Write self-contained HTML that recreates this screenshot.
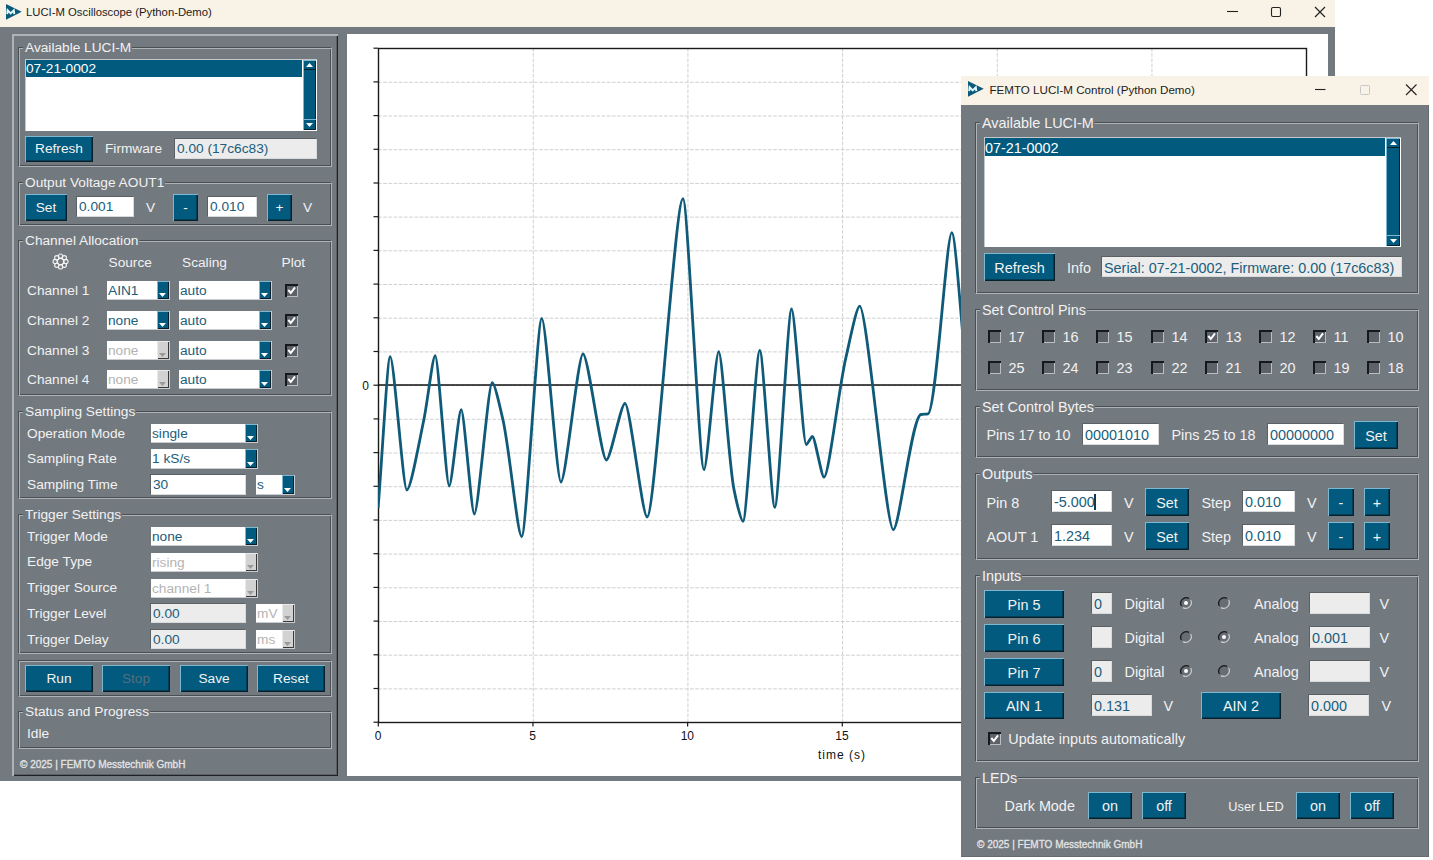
<!DOCTYPE html>
<html><head><meta charset="utf-8"><style>
html,body{margin:0;padding:0;background:#ffffff;width:1433px;height:860px;overflow:hidden;}
body{position:relative;font-family:"Liberation Sans", sans-serif;}
div,svg{position:absolute;}
.t{white-space:pre;}
</style></head><body>
<div style="left:0px;top:0px;width:1335px;height:27px;background:#f9f2e6"></div>
<div style="left:0px;top:27px;width:1335px;height:754px;background:#72797f"></div>
<svg style="left:5.5px;top:3.5px" width="17" height="17"><polygon points="0,0 15.7,7.7 0,15.7" fill="#0b5a7a"/><path d="M1.2,10.2 L1.6,6.2 L4.7,9.3 L7.8,6.2 L8.3,10.2" fill="none" stroke="#e8fbff" stroke-width="1.9" stroke-linejoin="miter"/></svg>
<div class="t" style="left:26px;top:6.83px;font-size:11.3px;line-height:11.3px;color:#1c1c1c;">LUCI-M Oscilloscope (Python-Demo)</div>
<svg style="left:1222px;top:2px" width="110" height="20"><line x1="5" y1="9.5" x2="16" y2="9.5" stroke="#222" stroke-width="1.1"/><rect x="49.5" y="5.5" width="9" height="9" rx="1.5" fill="none" stroke="#222" stroke-width="1.1"/><path d="M93,5 L103,15 M103,5 L93,15" stroke="#222" stroke-width="1.2"/></svg>
<div style="left:12px;top:34px;width:326px;height:742px;background:#72797f;box-shadow:inset 2px 2px 0 #aeb3b8, inset -1px -1px 0 #1e2226, inset -2px -2px 0 #5a5f64"></div>
<div style="left:18px;top:47px;width:314px;height:120px;box-sizing:border-box;border:1px solid;border-color:#4a4f54 #aeb3b8 #aeb3b8 #4a4f54;box-shadow:inset 1px 1px 0 #aeb3b8, inset -1px -1px 0 #4a4f54"></div>
<div class="t" style="left:23px;top:40.90px;font-size:13.7px;line-height:13.7px;color:#f2f2f2;background:#72797f;padding:0 1px 0 2px">Available LUCI-M</div>
<div style="left:25px;top:59px;width:292px;height:72px;background:#ffffff;box-shadow:inset 1px 1px 0 #c3c8cc"></div>
<div style="left:26px;top:60px;width:276px;height:17px;background:#025a7e"></div>
<div class="t" style="left:26px;top:61.90px;font-size:13.7px;line-height:13.7px;color:#ffffff;">07-21-0002</div>
<div style="left:303px;top:60px;width:13px;height:70px;background:#025a7e;box-shadow:inset 1px 0 0 #7db8d0, inset -1px 0 0 #08202c"></div>
<div style="left:303px;top:60px;width:13px;height:10px;background:#025a7e;box-shadow:inset 1px 1px 0 #7db8d0, inset -1px -1px 0 #08202c"></div>
<div style="left:303px;top:119px;width:13px;height:11px;background:#025a7e;box-shadow:inset 1px 1px 0 #7db8d0, inset -1px -1px 0 #08202c"></div>
<svg style="left:306.0px;top:63px" width="7" height="4"><polygon points="0,4 7,4 3.5,0" fill="#fff"/></svg>
<svg style="left:306.0px;top:123px" width="7" height="4"><polygon points="0,0 7,0 3.5,4" fill="#fff"/></svg>
<div style="left:25px;top:136px;width:68px;height:26px;background:#025a7e;box-shadow:inset 1px 1px 0 #7db8d0, inset -1px -1px 0 #08202c, inset -2px -2px 0 #043d55"></div>
<div class="t" style="left:-241.0px;width:600px;text-align:center;top:142.40px;font-size:13.7px;line-height:13.7px;color:#f2f2f2;">Refresh</div>
<div class="t" style="left:105px;top:142.40px;font-size:13.7px;line-height:13.7px;color:#f2f2f2;">Firmware</div>
<div style="left:175px;top:139px;width:142px;height:20px;background:#ececec;box-shadow:-1px -1px 0 #5b6065, inset -1px -1px 0 #d8dadc"></div>
<div class="t" style="left:177px;top:142.40px;font-size:13.7px;line-height:13.7px;color:#205d7b;">0.00 (17c6c83)</div>
<div style="left:18px;top:182px;width:314px;height:44px;box-sizing:border-box;border:1px solid;border-color:#4a4f54 #aeb3b8 #aeb3b8 #4a4f54;box-shadow:inset 1px 1px 0 #aeb3b8, inset -1px -1px 0 #4a4f54"></div>
<div class="t" style="left:23px;top:175.90px;font-size:13.7px;line-height:13.7px;color:#f2f2f2;background:#72797f;padding:0 1px 0 2px">Output Voltage AOUT1</div>
<div style="left:25px;top:194px;width:42px;height:27px;background:#025a7e;box-shadow:inset 1px 1px 0 #7db8d0, inset -1px -1px 0 #08202c, inset -2px -2px 0 #043d55"></div>
<div class="t" style="left:-254.0px;width:600px;text-align:center;top:200.90px;font-size:13.7px;line-height:13.7px;color:#f2f2f2;">Set</div>
<div style="left:77px;top:197px;width:57px;height:20px;background:#ffffff;box-shadow:-1px -1px 0 #5b6065, inset -1px -1px 0 #d8dadc"></div>
<div class="t" style="left:79px;top:200.40px;font-size:13.7px;line-height:13.7px;color:#205d7b;">0.001</div>
<div class="t" style="left:146px;top:201.00px;font-size:13.7px;line-height:13.7px;color:#f2f2f2;">V</div>
<div style="left:173px;top:194px;width:25px;height:27px;background:#025a7e;box-shadow:inset 1px 1px 0 #7db8d0, inset -1px -1px 0 #08202c, inset -2px -2px 0 #043d55"></div>
<div class="t" style="left:-114.5px;width:600px;text-align:center;top:200.90px;font-size:13.7px;line-height:13.7px;color:#f2f2f2;">-</div>
<div style="left:208px;top:197px;width:49px;height:20px;background:#ffffff;box-shadow:-1px -1px 0 #5b6065, inset -1px -1px 0 #d8dadc"></div>
<div class="t" style="left:210px;top:200.40px;font-size:13.7px;line-height:13.7px;color:#205d7b;">0.010</div>
<div style="left:267px;top:194px;width:25px;height:27px;background:#025a7e;box-shadow:inset 1px 1px 0 #7db8d0, inset -1px -1px 0 #08202c, inset -2px -2px 0 #043d55"></div>
<div class="t" style="left:-20.5px;width:600px;text-align:center;top:200.90px;font-size:13.7px;line-height:13.7px;color:#f2f2f2;">+</div>
<div class="t" style="left:303px;top:201.00px;font-size:13.7px;line-height:13.7px;color:#f2f2f2;">V</div>
<div style="left:18px;top:240px;width:314px;height:156px;box-sizing:border-box;border:1px solid;border-color:#4a4f54 #aeb3b8 #aeb3b8 #4a4f54;box-shadow:inset 1px 1px 0 #aeb3b8, inset -1px -1px 0 #4a4f54"></div>
<div class="t" style="left:23px;top:233.90px;font-size:13.7px;line-height:13.7px;color:#f2f2f2;background:#72797f;padding:0 1px 0 2px">Channel Allocation</div>
<svg style="left:52px;top:253.4px" width="17" height="17"><g fill="none" stroke="#f2f2f2" stroke-width="1.1"><circle cx="13.95" cy="8.50" r="2.1"/><circle cx="12.37" cy="12.32" r="2.1"/><circle cx="8.55" cy="13.90" r="2.1"/><circle cx="4.73" cy="12.32" r="2.1"/><circle cx="3.15" cy="8.50" r="2.1"/><circle cx="4.73" cy="4.68" r="2.1"/><circle cx="8.55" cy="3.10" r="2.1"/><circle cx="12.37" cy="4.68" r="2.1"/><circle cx="8.55" cy="8.5" r="3.1"/></g></svg>
<div class="t" style="left:108.5px;top:255.90px;font-size:13.7px;line-height:13.7px;color:#f2f2f2;">Source</div>
<div class="t" style="left:182px;top:255.90px;font-size:13.7px;line-height:13.7px;color:#f2f2f2;">Scaling</div>
<div class="t" style="left:281.5px;top:255.90px;font-size:13.7px;line-height:13.7px;color:#f2f2f2;">Plot</div>
<div class="t" style="left:27px;top:284.00px;font-size:13.7px;line-height:13.7px;color:#f2f2f2;">Channel 1</div>
<div style="left:107px;top:281px;width:63px;height:19px;background:#ffffff;box-shadow:inset -1px -1px 0 #c9ccd0"></div>
<div class="t" style="left:108px;top:283.90px;font-size:13.7px;line-height:13.7px;color:#205d7b;">AIN1</div>
<div style="left:156.5px;top:281px;width:12.5px;height:18px;background:#025a7e;box-shadow:inset 1px 1px 0 #7db8d0, inset -1px -1px 0 #08202c"></div>
<svg style="left:159.25px;top:292.7px" width="7" height="4"><polygon points="0,0 7,0 3.5,4" fill="#ffffff"/></svg>
<div style="left:179px;top:281px;width:93px;height:19px;background:#ffffff;box-shadow:inset -1px -1px 0 #c9ccd0"></div>
<div class="t" style="left:180px;top:283.90px;font-size:13.7px;line-height:13.7px;color:#205d7b;">auto</div>
<div style="left:258.5px;top:281px;width:12.5px;height:18px;background:#025a7e;box-shadow:inset 1px 1px 0 #7db8d0, inset -1px -1px 0 #08202c"></div>
<svg style="left:261.25px;top:292.7px" width="7" height="4"><polygon points="0,0 7,0 3.5,4" fill="#ffffff"/></svg>
<div style="left:285px;top:284px;width:13px;height:13px;background:#5d6268;box-shadow:inset 2px 2px 0 #16191c, inset -1px -1px 0 #b9bec2"></div>
<svg style="left:285px;top:284px" width="13" height="13"><polyline points="3.3,6 5.8,9 10,3.3" fill="none" stroke="#ffffff" stroke-width="2"/></svg>
<div class="t" style="left:27px;top:314.00px;font-size:13.7px;line-height:13.7px;color:#f2f2f2;">Channel 2</div>
<div style="left:107px;top:311px;width:63px;height:19px;background:#ffffff;box-shadow:inset -1px -1px 0 #c9ccd0"></div>
<div class="t" style="left:108px;top:313.90px;font-size:13.7px;line-height:13.7px;color:#205d7b;">none</div>
<div style="left:156.5px;top:311px;width:12.5px;height:18px;background:#025a7e;box-shadow:inset 1px 1px 0 #7db8d0, inset -1px -1px 0 #08202c"></div>
<svg style="left:159.25px;top:322.7px" width="7" height="4"><polygon points="0,0 7,0 3.5,4" fill="#ffffff"/></svg>
<div style="left:179px;top:311px;width:93px;height:19px;background:#ffffff;box-shadow:inset -1px -1px 0 #c9ccd0"></div>
<div class="t" style="left:180px;top:313.90px;font-size:13.7px;line-height:13.7px;color:#205d7b;">auto</div>
<div style="left:258.5px;top:311px;width:12.5px;height:18px;background:#025a7e;box-shadow:inset 1px 1px 0 #7db8d0, inset -1px -1px 0 #08202c"></div>
<svg style="left:261.25px;top:322.7px" width="7" height="4"><polygon points="0,0 7,0 3.5,4" fill="#ffffff"/></svg>
<div style="left:285px;top:314px;width:13px;height:13px;background:#5d6268;box-shadow:inset 2px 2px 0 #16191c, inset -1px -1px 0 #b9bec2"></div>
<svg style="left:285px;top:314px" width="13" height="13"><polyline points="3.3,6 5.8,9 10,3.3" fill="none" stroke="#ffffff" stroke-width="2"/></svg>
<div class="t" style="left:27px;top:344.00px;font-size:13.7px;line-height:13.7px;color:#f2f2f2;">Channel 3</div>
<div style="left:107px;top:341px;width:63px;height:19px;background:#ffffff;box-shadow:inset -1px -1px 0 #c9ccd0"></div>
<div class="t" style="left:108px;top:343.90px;font-size:13.7px;line-height:13.7px;color:#b4b4b4;">none</div>
<div style="left:156.5px;top:341px;width:12.5px;height:18px;background:#d2d2d2;box-shadow:inset 1px 1px 0 #eaeaea, inset -1px -1px 0 #3a3a3a"></div>
<svg style="left:159.25px;top:352.7px" width="7" height="4"><polygon points="0,0 7,0 3.5,4" fill="#9a9a9a"/></svg>
<div style="left:179px;top:341px;width:93px;height:19px;background:#ffffff;box-shadow:inset -1px -1px 0 #c9ccd0"></div>
<div class="t" style="left:180px;top:343.90px;font-size:13.7px;line-height:13.7px;color:#205d7b;">auto</div>
<div style="left:258.5px;top:341px;width:12.5px;height:18px;background:#025a7e;box-shadow:inset 1px 1px 0 #7db8d0, inset -1px -1px 0 #08202c"></div>
<svg style="left:261.25px;top:352.7px" width="7" height="4"><polygon points="0,0 7,0 3.5,4" fill="#ffffff"/></svg>
<div style="left:285px;top:344px;width:13px;height:13px;background:#5d6268;box-shadow:inset 2px 2px 0 #16191c, inset -1px -1px 0 #b9bec2"></div>
<svg style="left:285px;top:344px" width="13" height="13"><polyline points="3.3,6 5.8,9 10,3.3" fill="none" stroke="#ffffff" stroke-width="2"/></svg>
<div class="t" style="left:27px;top:373.00px;font-size:13.7px;line-height:13.7px;color:#f2f2f2;">Channel 4</div>
<div style="left:107px;top:370px;width:63px;height:19px;background:#ffffff;box-shadow:inset -1px -1px 0 #c9ccd0"></div>
<div class="t" style="left:108px;top:372.90px;font-size:13.7px;line-height:13.7px;color:#b4b4b4;">none</div>
<div style="left:156.5px;top:370px;width:12.5px;height:18px;background:#d2d2d2;box-shadow:inset 1px 1px 0 #eaeaea, inset -1px -1px 0 #3a3a3a"></div>
<svg style="left:159.25px;top:381.7px" width="7" height="4"><polygon points="0,0 7,0 3.5,4" fill="#9a9a9a"/></svg>
<div style="left:179px;top:370px;width:93px;height:19px;background:#ffffff;box-shadow:inset -1px -1px 0 #c9ccd0"></div>
<div class="t" style="left:180px;top:372.90px;font-size:13.7px;line-height:13.7px;color:#205d7b;">auto</div>
<div style="left:258.5px;top:370px;width:12.5px;height:18px;background:#025a7e;box-shadow:inset 1px 1px 0 #7db8d0, inset -1px -1px 0 #08202c"></div>
<svg style="left:261.25px;top:381.7px" width="7" height="4"><polygon points="0,0 7,0 3.5,4" fill="#ffffff"/></svg>
<div style="left:285px;top:373px;width:13px;height:13px;background:#5d6268;box-shadow:inset 2px 2px 0 #16191c, inset -1px -1px 0 #b9bec2"></div>
<svg style="left:285px;top:373px" width="13" height="13"><polyline points="3.3,6 5.8,9 10,3.3" fill="none" stroke="#ffffff" stroke-width="2"/></svg>
<div style="left:18px;top:411px;width:314px;height:88px;box-sizing:border-box;border:1px solid;border-color:#4a4f54 #aeb3b8 #aeb3b8 #4a4f54;box-shadow:inset 1px 1px 0 #aeb3b8, inset -1px -1px 0 #4a4f54"></div>
<div class="t" style="left:23px;top:404.90px;font-size:13.7px;line-height:13.7px;color:#f2f2f2;background:#72797f;padding:0 1px 0 2px">Sampling Settings</div>
<div class="t" style="left:27px;top:426.80px;font-size:13.7px;line-height:13.7px;color:#f2f2f2;">Operation Mode</div>
<div style="left:151px;top:424px;width:107px;height:19px;background:#ffffff;box-shadow:inset -1px -1px 0 #c9ccd0"></div>
<div class="t" style="left:152px;top:426.90px;font-size:13.7px;line-height:13.7px;color:#205d7b;">single</div>
<div style="left:244.5px;top:424px;width:12.5px;height:18px;background:#025a7e;box-shadow:inset 1px 1px 0 #7db8d0, inset -1px -1px 0 #08202c"></div>
<svg style="left:247.25px;top:435.7px" width="7" height="4"><polygon points="0,0 7,0 3.5,4" fill="#ffffff"/></svg>
<div class="t" style="left:27px;top:452.40px;font-size:13.7px;line-height:13.7px;color:#f2f2f2;">Sampling Rate</div>
<div style="left:151px;top:449px;width:107px;height:20px;background:#ffffff;box-shadow:inset -1px -1px 0 #c9ccd0"></div>
<div class="t" style="left:152px;top:452.40px;font-size:13.7px;line-height:13.7px;color:#205d7b;">1 kS/s</div>
<div style="left:244.5px;top:449px;width:12.5px;height:19px;background:#025a7e;box-shadow:inset 1px 1px 0 #7db8d0, inset -1px -1px 0 #08202c"></div>
<svg style="left:247.25px;top:461.7px" width="7" height="4"><polygon points="0,0 7,0 3.5,4" fill="#ffffff"/></svg>
<div class="t" style="left:27px;top:478.10px;font-size:13.7px;line-height:13.7px;color:#f2f2f2;">Sampling Time</div>
<div style="left:151px;top:475px;width:95px;height:20px;background:#ffffff;box-shadow:-1px -1px 0 #5b6065, inset -1px -1px 0 #d8dadc"></div>
<div class="t" style="left:153px;top:478.40px;font-size:13.7px;line-height:13.7px;color:#205d7b;">30</div>
<div style="left:256px;top:475px;width:39px;height:20px;background:#ffffff;box-shadow:inset -1px -1px 0 #c9ccd0"></div>
<div class="t" style="left:257px;top:478.40px;font-size:13.7px;line-height:13.7px;color:#205d7b;">s</div>
<div style="left:281.5px;top:475px;width:12.5px;height:19px;background:#025a7e;box-shadow:inset 1px 1px 0 #7db8d0, inset -1px -1px 0 #08202c"></div>
<svg style="left:284.25px;top:487.7px" width="7" height="4"><polygon points="0,0 7,0 3.5,4" fill="#ffffff"/></svg>
<div style="left:18px;top:514px;width:314px;height:140px;box-sizing:border-box;border:1px solid;border-color:#4a4f54 #aeb3b8 #aeb3b8 #4a4f54;box-shadow:inset 1px 1px 0 #aeb3b8, inset -1px -1px 0 #4a4f54"></div>
<div class="t" style="left:23px;top:507.90px;font-size:13.7px;line-height:13.7px;color:#f2f2f2;background:#72797f;padding:0 1px 0 2px">Trigger Settings</div>
<div class="t" style="left:27px;top:529.70px;font-size:13.7px;line-height:13.7px;color:#f2f2f2;">Trigger Mode</div>
<div style="left:151px;top:527px;width:107px;height:19px;background:#ffffff;box-shadow:inset -1px -1px 0 #c9ccd0"></div>
<div class="t" style="left:152px;top:529.90px;font-size:13.7px;line-height:13.7px;color:#205d7b;">none</div>
<div style="left:244.5px;top:527px;width:12.5px;height:18px;background:#025a7e;box-shadow:inset 1px 1px 0 #7db8d0, inset -1px -1px 0 #08202c"></div>
<svg style="left:247.25px;top:538.7px" width="7" height="4"><polygon points="0,0 7,0 3.5,4" fill="#ffffff"/></svg>
<div class="t" style="left:27px;top:555.40px;font-size:13.7px;line-height:13.7px;color:#f2f2f2;">Edge Type</div>
<div style="left:151px;top:553px;width:107px;height:19px;background:#ffffff;box-shadow:inset -1px -1px 0 #c9ccd0"></div>
<div class="t" style="left:152px;top:555.90px;font-size:13.7px;line-height:13.7px;color:#b4b4b4;">rising</div>
<div style="left:244.5px;top:553px;width:12.5px;height:18px;background:#d2d2d2;box-shadow:inset 1px 1px 0 #eaeaea, inset -1px -1px 0 #3a3a3a"></div>
<svg style="left:247.25px;top:564.7px" width="7" height="4"><polygon points="0,0 7,0 3.5,4" fill="#9a9a9a"/></svg>
<div class="t" style="left:27px;top:581.00px;font-size:13.7px;line-height:13.7px;color:#f2f2f2;">Trigger Source</div>
<div style="left:151px;top:579px;width:107px;height:19px;background:#ffffff;box-shadow:inset -1px -1px 0 #c9ccd0"></div>
<div class="t" style="left:152px;top:581.90px;font-size:13.7px;line-height:13.7px;color:#b4b4b4;">channel 1</div>
<div style="left:244.5px;top:579px;width:12.5px;height:18px;background:#d2d2d2;box-shadow:inset 1px 1px 0 #eaeaea, inset -1px -1px 0 #3a3a3a"></div>
<svg style="left:247.25px;top:590.7px" width="7" height="4"><polygon points="0,0 7,0 3.5,4" fill="#9a9a9a"/></svg>
<div class="t" style="left:27px;top:607.00px;font-size:13.7px;line-height:13.7px;color:#f2f2f2;">Trigger Level</div>
<div style="left:151px;top:604px;width:95px;height:19px;background:#ececec;box-shadow:-1px -1px 0 #5b6065, inset -1px -1px 0 #d8dadc"></div>
<div class="t" style="left:153px;top:606.90px;font-size:13.7px;line-height:13.7px;color:#205d7b;">0.00</div>
<div style="left:256px;top:604px;width:39px;height:19px;background:#ffffff;box-shadow:inset -1px -1px 0 #c9ccd0"></div>
<div class="t" style="left:257px;top:606.90px;font-size:13.7px;line-height:13.7px;color:#b4b4b4;">mV</div>
<div style="left:281.5px;top:604px;width:12.5px;height:18px;background:#d2d2d2;box-shadow:inset 1px 1px 0 #eaeaea, inset -1px -1px 0 #3a3a3a"></div>
<svg style="left:284.25px;top:615.7px" width="7" height="4"><polygon points="0,0 7,0 3.5,4" fill="#9a9a9a"/></svg>
<div class="t" style="left:27px;top:632.90px;font-size:13.7px;line-height:13.7px;color:#f2f2f2;">Trigger Delay</div>
<div style="left:151px;top:630px;width:95px;height:19px;background:#ececec;box-shadow:-1px -1px 0 #5b6065, inset -1px -1px 0 #d8dadc"></div>
<div class="t" style="left:153px;top:632.90px;font-size:13.7px;line-height:13.7px;color:#205d7b;">0.00</div>
<div style="left:256px;top:630px;width:39px;height:19px;background:#ffffff;box-shadow:inset -1px -1px 0 #c9ccd0"></div>
<div class="t" style="left:257px;top:632.90px;font-size:13.7px;line-height:13.7px;color:#b4b4b4;">ms</div>
<div style="left:281.5px;top:630px;width:12.5px;height:18px;background:#d2d2d2;box-shadow:inset 1px 1px 0 #eaeaea, inset -1px -1px 0 #3a3a3a"></div>
<svg style="left:284.25px;top:641.7px" width="7" height="4"><polygon points="0,0 7,0 3.5,4" fill="#9a9a9a"/></svg>
<div style="left:18px;top:660px;width:314px;height:37px;box-sizing:border-box;border:1px solid;border-color:#4a4f54 #aeb3b8 #aeb3b8 #4a4f54;box-shadow:inset 1px 1px 0 #aeb3b8, inset -1px -1px 0 #4a4f54"></div>
<div style="left:25px;top:665px;width:68px;height:27px;background:#025a7e;box-shadow:inset 1px 1px 0 #7db8d0, inset -1px -1px 0 #08202c, inset -2px -2px 0 #043d55"></div>
<div class="t" style="left:-241.0px;width:600px;text-align:center;top:671.90px;font-size:13.7px;line-height:13.7px;color:#f2f2f2;">Run</div>
<div style="left:102px;top:665px;width:68px;height:27px;background:#025a7e;box-shadow:inset 1px 1px 0 #7db8d0, inset -1px -1px 0 #08202c, inset -2px -2px 0 #043d55"></div>
<div class="t" style="left:-164.0px;width:600px;text-align:center;top:671.90px;font-size:13.7px;line-height:13.7px;color:#52707f;">Stop</div>
<div style="left:180px;top:665px;width:68px;height:27px;background:#025a7e;box-shadow:inset 1px 1px 0 #7db8d0, inset -1px -1px 0 #08202c, inset -2px -2px 0 #043d55"></div>
<div class="t" style="left:-86.0px;width:600px;text-align:center;top:671.90px;font-size:13.7px;line-height:13.7px;color:#f2f2f2;">Save</div>
<div style="left:257px;top:665px;width:68px;height:27px;background:#025a7e;box-shadow:inset 1px 1px 0 #7db8d0, inset -1px -1px 0 #08202c, inset -2px -2px 0 #043d55"></div>
<div class="t" style="left:-9.0px;width:600px;text-align:center;top:671.90px;font-size:13.7px;line-height:13.7px;color:#f2f2f2;">Reset</div>
<div style="left:18px;top:711px;width:314px;height:38px;box-sizing:border-box;border:1px solid;border-color:#4a4f54 #aeb3b8 #aeb3b8 #4a4f54;box-shadow:inset 1px 1px 0 #aeb3b8, inset -1px -1px 0 #4a4f54"></div>
<div class="t" style="left:23px;top:704.90px;font-size:13.7px;line-height:13.7px;color:#f2f2f2;background:#72797f;padding:0 1px 0 2px">Status and Progress</div>
<div class="t" style="left:27px;top:727.40px;font-size:13.7px;line-height:13.7px;color:#f2f2f2;">Idle</div>
<div class="t" style="left:20px;top:759.53px;font-size:10px;line-height:10px;color:#e4e4e4;-webkit-text-stroke:0.3px #e4e4e4">© 2025 | FEMTO Messtechnik GmbH</div>
<div style="left:347px;top:34px;width:981px;height:742px;background:#ffffff"></div>
<svg style="left:0px;top:0px" width="1433" height="860">
<line x1="378" y1="82.30" x2="1306" y2="82.30" stroke="#cdcdcd" stroke-width="0.95" stroke-dasharray="3.7,1.5"/>
<line x1="378" y1="116.00" x2="1306" y2="116.00" stroke="#cdcdcd" stroke-width="0.95" stroke-dasharray="3.7,1.5"/>
<line x1="378" y1="149.70" x2="1306" y2="149.70" stroke="#cdcdcd" stroke-width="0.95" stroke-dasharray="3.7,1.5"/>
<line x1="378" y1="183.40" x2="1306" y2="183.40" stroke="#cdcdcd" stroke-width="0.95" stroke-dasharray="3.7,1.5"/>
<line x1="378" y1="217.10" x2="1306" y2="217.10" stroke="#cdcdcd" stroke-width="0.95" stroke-dasharray="3.7,1.5"/>
<line x1="378" y1="250.80" x2="1306" y2="250.80" stroke="#cdcdcd" stroke-width="0.95" stroke-dasharray="3.7,1.5"/>
<line x1="378" y1="284.50" x2="1306" y2="284.50" stroke="#cdcdcd" stroke-width="0.95" stroke-dasharray="3.7,1.5"/>
<line x1="378" y1="318.20" x2="1306" y2="318.20" stroke="#cdcdcd" stroke-width="0.95" stroke-dasharray="3.7,1.5"/>
<line x1="378" y1="351.90" x2="1306" y2="351.90" stroke="#cdcdcd" stroke-width="0.95" stroke-dasharray="3.7,1.5"/>
<line x1="378" y1="385.60" x2="1306" y2="385.60" stroke="#cdcdcd" stroke-width="0.95" stroke-dasharray="3.7,1.5"/>
<line x1="378" y1="419.30" x2="1306" y2="419.30" stroke="#cdcdcd" stroke-width="0.95" stroke-dasharray="3.7,1.5"/>
<line x1="378" y1="453.00" x2="1306" y2="453.00" stroke="#cdcdcd" stroke-width="0.95" stroke-dasharray="3.7,1.5"/>
<line x1="378" y1="486.70" x2="1306" y2="486.70" stroke="#cdcdcd" stroke-width="0.95" stroke-dasharray="3.7,1.5"/>
<line x1="378" y1="520.40" x2="1306" y2="520.40" stroke="#cdcdcd" stroke-width="0.95" stroke-dasharray="3.7,1.5"/>
<line x1="378" y1="554.10" x2="1306" y2="554.10" stroke="#cdcdcd" stroke-width="0.95" stroke-dasharray="3.7,1.5"/>
<line x1="378" y1="587.80" x2="1306" y2="587.80" stroke="#cdcdcd" stroke-width="0.95" stroke-dasharray="3.7,1.5"/>
<line x1="378" y1="621.50" x2="1306" y2="621.50" stroke="#cdcdcd" stroke-width="0.95" stroke-dasharray="3.7,1.5"/>
<line x1="378" y1="655.20" x2="1306" y2="655.20" stroke="#cdcdcd" stroke-width="0.95" stroke-dasharray="3.7,1.5"/>
<line x1="378" y1="688.90" x2="1306" y2="688.90" stroke="#cdcdcd" stroke-width="0.95" stroke-dasharray="3.7,1.5"/>
<line x1="533.27" y1="48" x2="533.27" y2="722" stroke="#cdcdcd" stroke-width="0.95" stroke-dasharray="3.7,1.5"/>
<line x1="687.93" y1="48" x2="687.93" y2="722" stroke="#cdcdcd" stroke-width="0.95" stroke-dasharray="3.7,1.5"/>
<line x1="842.60" y1="48" x2="842.60" y2="722" stroke="#cdcdcd" stroke-width="0.95" stroke-dasharray="3.7,1.5"/>
<line x1="997.27" y1="48" x2="997.27" y2="722" stroke="#cdcdcd" stroke-width="0.95" stroke-dasharray="3.7,1.5"/>
<line x1="1151.93" y1="48" x2="1151.93" y2="722" stroke="#cdcdcd" stroke-width="0.95" stroke-dasharray="3.7,1.5"/>
<line x1="373.5" y1="48.20" x2="378" y2="48.20" stroke="#1a1a1a" stroke-width="1.2"/>
<line x1="373.5" y1="81.90" x2="378" y2="81.90" stroke="#1a1a1a" stroke-width="1.2"/>
<line x1="373.5" y1="115.60" x2="378" y2="115.60" stroke="#1a1a1a" stroke-width="1.2"/>
<line x1="373.5" y1="149.30" x2="378" y2="149.30" stroke="#1a1a1a" stroke-width="1.2"/>
<line x1="373.5" y1="183.00" x2="378" y2="183.00" stroke="#1a1a1a" stroke-width="1.2"/>
<line x1="373.5" y1="216.70" x2="378" y2="216.70" stroke="#1a1a1a" stroke-width="1.2"/>
<line x1="373.5" y1="250.40" x2="378" y2="250.40" stroke="#1a1a1a" stroke-width="1.2"/>
<line x1="373.5" y1="284.10" x2="378" y2="284.10" stroke="#1a1a1a" stroke-width="1.2"/>
<line x1="373.5" y1="317.80" x2="378" y2="317.80" stroke="#1a1a1a" stroke-width="1.2"/>
<line x1="373.5" y1="351.50" x2="378" y2="351.50" stroke="#1a1a1a" stroke-width="1.2"/>
<line x1="373.5" y1="385.20" x2="378" y2="385.20" stroke="#1a1a1a" stroke-width="1.2"/>
<line x1="373.5" y1="418.90" x2="378" y2="418.90" stroke="#1a1a1a" stroke-width="1.2"/>
<line x1="373.5" y1="452.60" x2="378" y2="452.60" stroke="#1a1a1a" stroke-width="1.2"/>
<line x1="373.5" y1="486.30" x2="378" y2="486.30" stroke="#1a1a1a" stroke-width="1.2"/>
<line x1="373.5" y1="520.00" x2="378" y2="520.00" stroke="#1a1a1a" stroke-width="1.2"/>
<line x1="373.5" y1="553.70" x2="378" y2="553.70" stroke="#1a1a1a" stroke-width="1.2"/>
<line x1="373.5" y1="587.40" x2="378" y2="587.40" stroke="#1a1a1a" stroke-width="1.2"/>
<line x1="373.5" y1="621.10" x2="378" y2="621.10" stroke="#1a1a1a" stroke-width="1.2"/>
<line x1="373.5" y1="654.80" x2="378" y2="654.80" stroke="#1a1a1a" stroke-width="1.2"/>
<line x1="373.5" y1="688.50" x2="378" y2="688.50" stroke="#1a1a1a" stroke-width="1.2"/>
<line x1="373.5" y1="722.20" x2="378" y2="722.20" stroke="#1a1a1a" stroke-width="1.2"/>
<line x1="378.30" y1="722" x2="378.30" y2="726.5" stroke="#1a1a1a" stroke-width="1.2"/>
<line x1="532.97" y1="722" x2="532.97" y2="726.5" stroke="#1a1a1a" stroke-width="1.2"/>
<line x1="687.63" y1="722" x2="687.63" y2="726.5" stroke="#1a1a1a" stroke-width="1.2"/>
<line x1="842.30" y1="722" x2="842.30" y2="726.5" stroke="#1a1a1a" stroke-width="1.2"/>
<line x1="996.97" y1="722" x2="996.97" y2="726.5" stroke="#1a1a1a" stroke-width="1.2"/>
<line x1="1151.63" y1="722" x2="1151.63" y2="726.5" stroke="#1a1a1a" stroke-width="1.2"/>
<line x1="1306.30" y1="722" x2="1306.30" y2="726.5" stroke="#1a1a1a" stroke-width="1.2"/>
<rect x="378.5" y="48.5" width="928" height="674" fill="none" stroke="#1a1a1a" stroke-width="1.4"/>
<line x1="378" y1="385" x2="1306" y2="385" stroke="#111" stroke-width="1.7"/>
<clipPath id="cp"><rect x="378" y="48" width="928" height="674"/></clipPath>
<path d="M378.10,508.00 C382.13,457.53 387.54,356.60 390.20,356.60 C393.85,356.60 403.15,490.00 406.80,490.00 C410.54,490.00 418.13,447.27 423.80,420.00 C427.60,401.71 432.69,355.60 435.20,355.60 C438.28,355.60 446.12,486.00 449.20,486.00 C451.84,486.00 458.56,409.70 461.20,409.70 C464.08,409.70 471.42,514.00 474.30,514.00 C478.24,514.00 488.26,382.60 492.20,382.60 C494.58,382.60 499.40,404.37 503.00,420.00 C509.23,447.06 517.59,536.50 521.70,536.50 C526.12,536.50 537.38,318.40 541.80,318.40 C546.00,318.40 556.70,482.00 560.90,482.00 C565.76,482.00 578.14,353.80 583.00,353.80 C588.15,353.80 601.25,460.00 606.40,460.00 C610.49,460.00 620.91,403.30 625.00,403.30 C629.86,403.30 642.24,517.00 647.10,517.00 C655.00,517.00 675.10,198.60 683.00,198.60 C687.62,198.60 699.38,469.70 704.00,469.70 C707.23,469.70 715.47,351.60 718.70,351.60 C722.07,351.60 728.90,464.65 734.00,489.60 C737.00,504.28 741.02,521.40 743.00,521.40 C746.70,521.40 756.10,350.30 759.80,350.30 C763.10,350.30 771.50,507.30 774.80,507.30 C778.50,507.30 787.90,309.00 791.60,309.00 C794.81,309.00 802.99,444.50 806.20,444.50 C807.56,444.50 811.04,436.50 812.40,436.50 C814.95,436.50 821.45,477.20 824.00,477.20 C828.80,477.20 838.53,389.76 845.80,358.00 C850.43,337.75 856.64,306.20 859.70,306.20 C867.09,306.20 885.91,529.60 893.30,529.60 C899.39,529.60 911.77,416.02 921.00,414.50 C923.33,414.12 925.67,414.19 928.00,413.80 C935.93,412.47 946.56,232.70 951.80,232.70 C955.80,232.70 963.93,357.57 970.00,420.00" fill="none" stroke="#0e5a78" stroke-width="2.8" stroke-linejoin="round" clip-path="url(#cp)"/>
</svg>
<div class="t" style="left:65.5px;width:600px;text-align:center;top:379.84px;font-size:12px;line-height:12px;color:#111;">0</div>
<div class="t" style="left:78.0px;width:600px;text-align:center;top:730.34px;font-size:12px;line-height:12px;color:#111;">0</div>
<div class="t" style="left:232.66666666666663px;width:600px;text-align:center;top:730.34px;font-size:12px;line-height:12px;color:#111;">5</div>
<div class="t" style="left:387.33333333333326px;width:600px;text-align:center;top:730.34px;font-size:12px;line-height:12px;color:#111;">10</div>
<div class="t" style="left:542.0px;width:600px;text-align:center;top:730.34px;font-size:12px;line-height:12px;color:#111;">15</div>
<div class="t" style="left:696.6666666666666px;width:600px;text-align:center;top:730.34px;font-size:12px;line-height:12px;color:#111;">20</div>
<div class="t" style="left:851.3333333333335px;width:600px;text-align:center;top:730.34px;font-size:12px;line-height:12px;color:#111;">25</div>
<div class="t" style="left:1006.0px;width:600px;text-align:center;top:730.34px;font-size:12px;line-height:12px;color:#111;">30</div>
<div class="t" style="left:542px;width:600px;text-align:center;top:749.24px;font-size:12px;line-height:12px;color:#111;letter-spacing:1px">time (s)</div>
<div style="left:961px;top:76px;width:468px;height:781px;background:#72797f;box-shadow:inset -1px -1px 0 #666b70"></div>
<div style="left:961px;top:76px;width:468px;height:29px;background:#f9f2e6"></div>
<svg style="left:968px;top:81px" width="17" height="17"><polygon points="0,0 15.7,7.7 0,15.7" fill="#0b5a7a"/><path d="M1.2,10.2 L1.6,6.2 L4.7,9.3 L7.8,6.2 L8.3,10.2" fill="none" stroke="#e8fbff" stroke-width="1.9" stroke-linejoin="miter"/></svg>
<div class="t" style="left:989.5px;top:84.18px;font-size:11.6px;line-height:11.6px;color:#1c1c1c;">FEMTO LUCI-M Control (Python Demo)</div>
<svg style="left:1300px;top:78px" width="129" height="26"><line x1="15" y1="11.5" x2="25.5" y2="11.5" stroke="#222" stroke-width="1.1"/><rect x="60.5" y="7.5" width="9" height="9" rx="1" fill="none" stroke="#c8c8c8" stroke-width="1"/><path d="M106,6.5 L116.5,17 M116.5,6.5 L106,17" stroke="#222" stroke-width="1.1"/></svg>
<div style="left:975px;top:122px;width:444px;height:172px;box-sizing:border-box;border:1px solid;border-color:#4a4f54 #aeb3b8 #aeb3b8 #4a4f54;box-shadow:inset 1px 1px 0 #aeb3b8, inset -1px -1px 0 #4a4f54"></div>
<div class="t" style="left:980px;top:115.56px;font-size:14.4px;line-height:14.4px;color:#f2f2f2;background:#72797f;padding:0 1px 0 2px">Available LUCI-M</div>
<div style="left:984px;top:137px;width:417px;height:110px;background:#ffffff;box-shadow:inset 1px 1px 0 #c3c8cc"></div>
<div style="left:985px;top:138px;width:400px;height:18px;background:#025a7e"></div>
<div class="t" style="left:985px;top:140.71px;font-size:14.4px;line-height:14.4px;color:#ffffff;">07-21-0002</div>
<div style="left:1386px;top:138px;width:14px;height:108px;background:#025a7e;box-shadow:inset 1px 0 0 #7db8d0, inset -1px 0 0 #08202c"></div>
<div style="left:1386px;top:138px;width:14px;height:10px;background:#025a7e;box-shadow:inset 1px 1px 0 #7db8d0, inset -1px -1px 0 #08202c"></div>
<div style="left:1386px;top:235px;width:14px;height:11px;background:#025a7e;box-shadow:inset 1px 1px 0 #7db8d0, inset -1px -1px 0 #08202c"></div>
<svg style="left:1389.5px;top:141px" width="7" height="4"><polygon points="0,4 7,4 3.5,0" fill="#fff"/></svg>
<svg style="left:1389.5px;top:239px" width="7" height="4"><polygon points="0,0 7,0 3.5,4" fill="#fff"/></svg>
<div style="left:984px;top:253px;width:71px;height:28px;background:#025a7e;box-shadow:inset 1px 1px 0 #7db8d0, inset -1px -1px 0 #08202c, inset -2px -2px 0 #043d55"></div>
<div class="t" style="left:719.5px;width:600px;text-align:center;top:260.76px;font-size:14.4px;line-height:14.4px;color:#f2f2f2;">Refresh</div>
<div class="t" style="left:1067px;top:260.51px;font-size:14.4px;line-height:14.4px;color:#f2f2f2;">Info</div>
<div style="left:1102px;top:257px;width:300px;height:20px;background:#ececec;box-shadow:-1px -1px 0 #5b6065, inset -1px -1px 0 #d8dadc"></div>
<div class="t" style="left:1104px;top:260.76px;font-size:14.4px;line-height:14.4px;color:#205d7b;">Serial: 07-21-0002, Firmware: 0.00 (17c6c83)</div>
<div style="left:975px;top:309px;width:444px;height:82px;box-sizing:border-box;border:1px solid;border-color:#4a4f54 #aeb3b8 #aeb3b8 #4a4f54;box-shadow:inset 1px 1px 0 #aeb3b8, inset -1px -1px 0 #4a4f54"></div>
<div class="t" style="left:980px;top:302.56px;font-size:14.4px;line-height:14.4px;color:#f2f2f2;background:#72797f;padding:0 1px 0 2px">Set Control Pins</div>
<div style="left:988px;top:330px;width:13px;height:13px;background:#5d6268;box-shadow:inset 2px 2px 0 #16191c, inset -1px -1px 0 #b9bec2"></div>
<div class="t" style="left:1008.5px;top:330.21px;font-size:14.4px;line-height:14.4px;color:#f2f2f2;">17</div>
<div style="left:988px;top:361px;width:13px;height:13px;background:#5d6268;box-shadow:inset 2px 2px 0 #16191c, inset -1px -1px 0 #b9bec2"></div>
<div class="t" style="left:1008.5px;top:361.21px;font-size:14.4px;line-height:14.4px;color:#f2f2f2;">25</div>
<div style="left:1042px;top:330px;width:13px;height:13px;background:#5d6268;box-shadow:inset 2px 2px 0 #16191c, inset -1px -1px 0 #b9bec2"></div>
<div class="t" style="left:1062.5px;top:330.21px;font-size:14.4px;line-height:14.4px;color:#f2f2f2;">16</div>
<div style="left:1042px;top:361px;width:13px;height:13px;background:#5d6268;box-shadow:inset 2px 2px 0 #16191c, inset -1px -1px 0 #b9bec2"></div>
<div class="t" style="left:1062.5px;top:361.21px;font-size:14.4px;line-height:14.4px;color:#f2f2f2;">24</div>
<div style="left:1096px;top:330px;width:13px;height:13px;background:#5d6268;box-shadow:inset 2px 2px 0 #16191c, inset -1px -1px 0 #b9bec2"></div>
<div class="t" style="left:1116.5px;top:330.21px;font-size:14.4px;line-height:14.4px;color:#f2f2f2;">15</div>
<div style="left:1096px;top:361px;width:13px;height:13px;background:#5d6268;box-shadow:inset 2px 2px 0 #16191c, inset -1px -1px 0 #b9bec2"></div>
<div class="t" style="left:1116.5px;top:361.21px;font-size:14.4px;line-height:14.4px;color:#f2f2f2;">23</div>
<div style="left:1151px;top:330px;width:13px;height:13px;background:#5d6268;box-shadow:inset 2px 2px 0 #16191c, inset -1px -1px 0 #b9bec2"></div>
<div class="t" style="left:1171.5px;top:330.21px;font-size:14.4px;line-height:14.4px;color:#f2f2f2;">14</div>
<div style="left:1151px;top:361px;width:13px;height:13px;background:#5d6268;box-shadow:inset 2px 2px 0 #16191c, inset -1px -1px 0 #b9bec2"></div>
<div class="t" style="left:1171.5px;top:361.21px;font-size:14.4px;line-height:14.4px;color:#f2f2f2;">22</div>
<div style="left:1205px;top:330px;width:13px;height:13px;background:#5d6268;box-shadow:inset 2px 2px 0 #16191c, inset -1px -1px 0 #b9bec2"></div>
<svg style="left:1205px;top:330px" width="13" height="13"><polyline points="3.3,6 5.8,9 10,3.3" fill="none" stroke="#ffffff" stroke-width="2"/></svg>
<div class="t" style="left:1225.5px;top:330.21px;font-size:14.4px;line-height:14.4px;color:#f2f2f2;">13</div>
<div style="left:1205px;top:361px;width:13px;height:13px;background:#5d6268;box-shadow:inset 2px 2px 0 #16191c, inset -1px -1px 0 #b9bec2"></div>
<div class="t" style="left:1225.5px;top:361.21px;font-size:14.4px;line-height:14.4px;color:#f2f2f2;">21</div>
<div style="left:1259px;top:330px;width:13px;height:13px;background:#5d6268;box-shadow:inset 2px 2px 0 #16191c, inset -1px -1px 0 #b9bec2"></div>
<div class="t" style="left:1279.5px;top:330.21px;font-size:14.4px;line-height:14.4px;color:#f2f2f2;">12</div>
<div style="left:1259px;top:361px;width:13px;height:13px;background:#5d6268;box-shadow:inset 2px 2px 0 #16191c, inset -1px -1px 0 #b9bec2"></div>
<div class="t" style="left:1279.5px;top:361.21px;font-size:14.4px;line-height:14.4px;color:#f2f2f2;">20</div>
<div style="left:1313px;top:330px;width:13px;height:13px;background:#5d6268;box-shadow:inset 2px 2px 0 #16191c, inset -1px -1px 0 #b9bec2"></div>
<svg style="left:1313px;top:330px" width="13" height="13"><polyline points="3.3,6 5.8,9 10,3.3" fill="none" stroke="#ffffff" stroke-width="2"/></svg>
<div class="t" style="left:1333.5px;top:330.21px;font-size:14.4px;line-height:14.4px;color:#f2f2f2;">11</div>
<div style="left:1313px;top:361px;width:13px;height:13px;background:#5d6268;box-shadow:inset 2px 2px 0 #16191c, inset -1px -1px 0 #b9bec2"></div>
<div class="t" style="left:1333.5px;top:361.21px;font-size:14.4px;line-height:14.4px;color:#f2f2f2;">19</div>
<div style="left:1367px;top:330px;width:13px;height:13px;background:#5d6268;box-shadow:inset 2px 2px 0 #16191c, inset -1px -1px 0 #b9bec2"></div>
<div class="t" style="left:1387.5px;top:330.21px;font-size:14.4px;line-height:14.4px;color:#f2f2f2;">10</div>
<div style="left:1367px;top:361px;width:13px;height:13px;background:#5d6268;box-shadow:inset 2px 2px 0 #16191c, inset -1px -1px 0 #b9bec2"></div>
<div class="t" style="left:1387.5px;top:361.21px;font-size:14.4px;line-height:14.4px;color:#f2f2f2;">18</div>
<div style="left:975px;top:406px;width:444px;height:52px;box-sizing:border-box;border:1px solid;border-color:#4a4f54 #aeb3b8 #aeb3b8 #4a4f54;box-shadow:inset 1px 1px 0 #aeb3b8, inset -1px -1px 0 #4a4f54"></div>
<div class="t" style="left:980px;top:399.56px;font-size:14.4px;line-height:14.4px;color:#f2f2f2;background:#72797f;padding:0 1px 0 2px">Set Control Bytes</div>
<div class="t" style="left:986.5px;top:428.11px;font-size:14.4px;line-height:14.4px;color:#f2f2f2;">Pins 17 to 10</div>
<div style="left:1083px;top:424px;width:76px;height:21px;background:#ffffff;box-shadow:-1px -1px 0 #5b6065, inset -1px -1px 0 #d8dadc"></div>
<div class="t" style="left:1085px;top:428.26px;font-size:14.4px;line-height:14.4px;color:#205d7b;">00001010</div>
<div class="t" style="left:1171.5px;top:428.11px;font-size:14.4px;line-height:14.4px;color:#f2f2f2;">Pins 25 to 18</div>
<div style="left:1268px;top:424px;width:76px;height:21px;background:#ffffff;box-shadow:-1px -1px 0 #5b6065, inset -1px -1px 0 #d8dadc"></div>
<div class="t" style="left:1270px;top:428.26px;font-size:14.4px;line-height:14.4px;color:#205d7b;">00000000</div>
<div style="left:1354px;top:421px;width:44px;height:28px;background:#025a7e;box-shadow:inset 1px 1px 0 #7db8d0, inset -1px -1px 0 #08202c, inset -2px -2px 0 #043d55"></div>
<div class="t" style="left:1076.0px;width:600px;text-align:center;top:428.76px;font-size:14.4px;line-height:14.4px;color:#f2f2f2;">Set</div>
<div style="left:975px;top:473px;width:444px;height:87px;box-sizing:border-box;border:1px solid;border-color:#4a4f54 #aeb3b8 #aeb3b8 #4a4f54;box-shadow:inset 1px 1px 0 #aeb3b8, inset -1px -1px 0 #4a4f54"></div>
<div class="t" style="left:980px;top:466.56px;font-size:14.4px;line-height:14.4px;color:#f2f2f2;background:#72797f;padding:0 1px 0 2px">Outputs</div>
<div class="t" style="left:986.5px;top:495.51px;font-size:14.4px;line-height:14.4px;color:#f2f2f2;">Pin 8</div>
<div style="left:1052px;top:491px;width:60px;height:21px;background:#ffffff;box-shadow:-1px -1px 0 #5b6065, inset -1px -1px 0 #d8dadc"></div>
<div class="t" style="left:1054px;top:495.26px;font-size:14.4px;line-height:14.4px;color:#205d7b;">-5.000</div>
<div class="t" style="left:1124px;top:495.51px;font-size:14.4px;line-height:14.4px;color:#f2f2f2;">V</div>
<div style="left:1145px;top:488px;width:44px;height:28px;background:#025a7e;box-shadow:inset 1px 1px 0 #7db8d0, inset -1px -1px 0 #08202c, inset -2px -2px 0 #043d55"></div>
<div class="t" style="left:867.0px;width:600px;text-align:center;top:495.76px;font-size:14.4px;line-height:14.4px;color:#f2f2f2;">Set</div>
<div class="t" style="left:1201.5px;top:495.51px;font-size:14.4px;line-height:14.4px;color:#f2f2f2;">Step</div>
<div style="left:1243px;top:491px;width:52px;height:21px;background:#ffffff;box-shadow:-1px -1px 0 #5b6065, inset -1px -1px 0 #d8dadc"></div>
<div class="t" style="left:1245px;top:495.26px;font-size:14.4px;line-height:14.4px;color:#205d7b;">0.010</div>
<div class="t" style="left:1307px;top:495.51px;font-size:14.4px;line-height:14.4px;color:#f2f2f2;">V</div>
<div style="left:1328px;top:488px;width:26px;height:28px;background:#025a7e;box-shadow:inset 1px 1px 0 #7db8d0, inset -1px -1px 0 #08202c, inset -2px -2px 0 #043d55"></div>
<div class="t" style="left:1041.0px;width:600px;text-align:center;top:495.76px;font-size:14.4px;line-height:14.4px;color:#f2f2f2;">-</div>
<div style="left:1364px;top:488px;width:26px;height:28px;background:#025a7e;box-shadow:inset 1px 1px 0 #7db8d0, inset -1px -1px 0 #08202c, inset -2px -2px 0 #043d55"></div>
<div class="t" style="left:1077.0px;width:600px;text-align:center;top:495.76px;font-size:14.4px;line-height:14.4px;color:#f2f2f2;">+</div>
<div class="t" style="left:986.5px;top:529.51px;font-size:14.4px;line-height:14.4px;color:#f2f2f2;">AOUT 1</div>
<div style="left:1052px;top:525px;width:60px;height:21px;background:#ffffff;box-shadow:-1px -1px 0 #5b6065, inset -1px -1px 0 #d8dadc"></div>
<div class="t" style="left:1054px;top:529.26px;font-size:14.4px;line-height:14.4px;color:#205d7b;">1.234</div>
<div class="t" style="left:1124px;top:529.51px;font-size:14.4px;line-height:14.4px;color:#f2f2f2;">V</div>
<div style="left:1145px;top:522px;width:44px;height:28px;background:#025a7e;box-shadow:inset 1px 1px 0 #7db8d0, inset -1px -1px 0 #08202c, inset -2px -2px 0 #043d55"></div>
<div class="t" style="left:867.0px;width:600px;text-align:center;top:529.76px;font-size:14.4px;line-height:14.4px;color:#f2f2f2;">Set</div>
<div class="t" style="left:1201.5px;top:529.51px;font-size:14.4px;line-height:14.4px;color:#f2f2f2;">Step</div>
<div style="left:1243px;top:525px;width:52px;height:21px;background:#ffffff;box-shadow:-1px -1px 0 #5b6065, inset -1px -1px 0 #d8dadc"></div>
<div class="t" style="left:1245px;top:529.26px;font-size:14.4px;line-height:14.4px;color:#205d7b;">0.010</div>
<div class="t" style="left:1307px;top:529.51px;font-size:14.4px;line-height:14.4px;color:#f2f2f2;">V</div>
<div style="left:1328px;top:522px;width:26px;height:28px;background:#025a7e;box-shadow:inset 1px 1px 0 #7db8d0, inset -1px -1px 0 #08202c, inset -2px -2px 0 #043d55"></div>
<div class="t" style="left:1041.0px;width:600px;text-align:center;top:529.76px;font-size:14.4px;line-height:14.4px;color:#f2f2f2;">-</div>
<div style="left:1364px;top:522px;width:26px;height:28px;background:#025a7e;box-shadow:inset 1px 1px 0 #7db8d0, inset -1px -1px 0 #08202c, inset -2px -2px 0 #043d55"></div>
<div class="t" style="left:1077.0px;width:600px;text-align:center;top:529.76px;font-size:14.4px;line-height:14.4px;color:#f2f2f2;">+</div>
<div style="left:1094px;top:493.5px;width:2px;height:16.5px;background:#0b3a55"></div>
<div style="left:975px;top:575px;width:444px;height:187px;box-sizing:border-box;border:1px solid;border-color:#4a4f54 #aeb3b8 #aeb3b8 #4a4f54;box-shadow:inset 1px 1px 0 #aeb3b8, inset -1px -1px 0 #4a4f54"></div>
<div class="t" style="left:980px;top:568.56px;font-size:14.4px;line-height:14.4px;color:#f2f2f2;background:#72797f;padding:0 1px 0 2px">Inputs</div>
<div style="left:984px;top:590px;width:80px;height:28px;background:#025a7e;box-shadow:inset 1px 1px 0 #7db8d0, inset -1px -1px 0 #08202c, inset -2px -2px 0 #043d55"></div>
<div class="t" style="left:724.0px;width:600px;text-align:center;top:597.76px;font-size:14.4px;line-height:14.4px;color:#f2f2f2;">Pin 5</div>
<div style="left:1092px;top:593px;width:20px;height:21px;background:#ececec;box-shadow:-1px -1px 0 #5b6065, inset -1px -1px 0 #d8dadc"></div>
<div class="t" style="left:1094px;top:597.26px;font-size:14.4px;line-height:14.4px;color:#205d7b;">0</div>
<div class="t" style="left:1124.5px;top:597.01px;font-size:14.4px;line-height:14.4px;color:#f2f2f2;">Digital</div>
<svg style="left:1179px;top:596px" width="14" height="14"><circle cx="7" cy="7" r="5.6" fill="#676d73"/><path d="M2.4,10 A5.6,5.6 0 0 1 10,2.4" stroke="#16191c" stroke-width="1.3" fill="none"/><path d="M11.6,4 A5.6,5.6 0 0 1 4,11.6" stroke="#c9cdd1" stroke-width="1.2" fill="none"/><circle cx="7" cy="7" r="2" fill="#ffffff"/></svg>
<svg style="left:1217px;top:596px" width="14" height="14"><circle cx="7" cy="7" r="5.6" fill="#676d73"/><path d="M2.4,10 A5.6,5.6 0 0 1 10,2.4" stroke="#16191c" stroke-width="1.3" fill="none"/><path d="M11.6,4 A5.6,5.6 0 0 1 4,11.6" stroke="#c9cdd1" stroke-width="1.2" fill="none"/></svg>
<div class="t" style="left:1254px;top:597.01px;font-size:14.4px;line-height:14.4px;color:#f2f2f2;">Analog</div>
<div style="left:1310px;top:593px;width:60px;height:21px;background:#ececec;box-shadow:-1px -1px 0 #5b6065, inset -1px -1px 0 #d8dadc"></div>
<div class="t" style="left:1379.5px;top:597.01px;font-size:14.4px;line-height:14.4px;color:#f2f2f2;">V</div>
<div style="left:984px;top:624px;width:80px;height:28px;background:#025a7e;box-shadow:inset 1px 1px 0 #7db8d0, inset -1px -1px 0 #08202c, inset -2px -2px 0 #043d55"></div>
<div class="t" style="left:724.0px;width:600px;text-align:center;top:631.76px;font-size:14.4px;line-height:14.4px;color:#f2f2f2;">Pin 6</div>
<div style="left:1092px;top:627px;width:20px;height:21px;background:#ececec;box-shadow:-1px -1px 0 #5b6065, inset -1px -1px 0 #d8dadc"></div>
<div class="t" style="left:1124.5px;top:631.01px;font-size:14.4px;line-height:14.4px;color:#f2f2f2;">Digital</div>
<svg style="left:1179px;top:630px" width="14" height="14"><circle cx="7" cy="7" r="5.6" fill="#676d73"/><path d="M2.4,10 A5.6,5.6 0 0 1 10,2.4" stroke="#16191c" stroke-width="1.3" fill="none"/><path d="M11.6,4 A5.6,5.6 0 0 1 4,11.6" stroke="#c9cdd1" stroke-width="1.2" fill="none"/></svg>
<svg style="left:1217px;top:630px" width="14" height="14"><circle cx="7" cy="7" r="5.6" fill="#676d73"/><path d="M2.4,10 A5.6,5.6 0 0 1 10,2.4" stroke="#16191c" stroke-width="1.3" fill="none"/><path d="M11.6,4 A5.6,5.6 0 0 1 4,11.6" stroke="#c9cdd1" stroke-width="1.2" fill="none"/><circle cx="7" cy="7" r="2" fill="#ffffff"/></svg>
<div class="t" style="left:1254px;top:631.01px;font-size:14.4px;line-height:14.4px;color:#f2f2f2;">Analog</div>
<div style="left:1310px;top:627px;width:60px;height:21px;background:#ececec;box-shadow:-1px -1px 0 #5b6065, inset -1px -1px 0 #d8dadc"></div>
<div class="t" style="left:1312px;top:631.26px;font-size:14.4px;line-height:14.4px;color:#205d7b;">0.001</div>
<div class="t" style="left:1379.5px;top:631.01px;font-size:14.4px;line-height:14.4px;color:#f2f2f2;">V</div>
<div style="left:984px;top:658px;width:80px;height:28px;background:#025a7e;box-shadow:inset 1px 1px 0 #7db8d0, inset -1px -1px 0 #08202c, inset -2px -2px 0 #043d55"></div>
<div class="t" style="left:724.0px;width:600px;text-align:center;top:665.76px;font-size:14.4px;line-height:14.4px;color:#f2f2f2;">Pin 7</div>
<div style="left:1092px;top:661px;width:20px;height:21px;background:#ececec;box-shadow:-1px -1px 0 #5b6065, inset -1px -1px 0 #d8dadc"></div>
<div class="t" style="left:1094px;top:665.26px;font-size:14.4px;line-height:14.4px;color:#205d7b;">0</div>
<div class="t" style="left:1124.5px;top:665.01px;font-size:14.4px;line-height:14.4px;color:#f2f2f2;">Digital</div>
<svg style="left:1179px;top:664px" width="14" height="14"><circle cx="7" cy="7" r="5.6" fill="#676d73"/><path d="M2.4,10 A5.6,5.6 0 0 1 10,2.4" stroke="#16191c" stroke-width="1.3" fill="none"/><path d="M11.6,4 A5.6,5.6 0 0 1 4,11.6" stroke="#c9cdd1" stroke-width="1.2" fill="none"/><circle cx="7" cy="7" r="2" fill="#ffffff"/></svg>
<svg style="left:1217px;top:664px" width="14" height="14"><circle cx="7" cy="7" r="5.6" fill="#676d73"/><path d="M2.4,10 A5.6,5.6 0 0 1 10,2.4" stroke="#16191c" stroke-width="1.3" fill="none"/><path d="M11.6,4 A5.6,5.6 0 0 1 4,11.6" stroke="#c9cdd1" stroke-width="1.2" fill="none"/></svg>
<div class="t" style="left:1254px;top:665.01px;font-size:14.4px;line-height:14.4px;color:#f2f2f2;">Analog</div>
<div style="left:1310px;top:661px;width:60px;height:21px;background:#ececec;box-shadow:-1px -1px 0 #5b6065, inset -1px -1px 0 #d8dadc"></div>
<div class="t" style="left:1379.5px;top:665.01px;font-size:14.4px;line-height:14.4px;color:#f2f2f2;">V</div>
<div style="left:984px;top:692px;width:80px;height:27px;background:#025a7e;box-shadow:inset 1px 1px 0 #7db8d0, inset -1px -1px 0 #08202c, inset -2px -2px 0 #043d55"></div>
<div class="t" style="left:724.0px;width:600px;text-align:center;top:699.26px;font-size:14.4px;line-height:14.4px;color:#f2f2f2;">AIN 1</div>
<div style="left:1092px;top:695px;width:60px;height:21px;background:#ececec;box-shadow:-1px -1px 0 #5b6065, inset -1px -1px 0 #d8dadc"></div>
<div class="t" style="left:1094px;top:699.26px;font-size:14.4px;line-height:14.4px;color:#205d7b;">0.131</div>
<div class="t" style="left:1163.5px;top:699.01px;font-size:14.4px;line-height:14.4px;color:#f2f2f2;">V</div>
<div style="left:1201px;top:692px;width:80px;height:27px;background:#025a7e;box-shadow:inset 1px 1px 0 #7db8d0, inset -1px -1px 0 #08202c, inset -2px -2px 0 #043d55"></div>
<div class="t" style="left:941.0px;width:600px;text-align:center;top:699.26px;font-size:14.4px;line-height:14.4px;color:#f2f2f2;">AIN 2</div>
<div style="left:1309px;top:695px;width:60px;height:21px;background:#ececec;box-shadow:-1px -1px 0 #5b6065, inset -1px -1px 0 #d8dadc"></div>
<div class="t" style="left:1311px;top:699.26px;font-size:14.4px;line-height:14.4px;color:#205d7b;">0.000</div>
<div class="t" style="left:1381.5px;top:699.01px;font-size:14.4px;line-height:14.4px;color:#f2f2f2;">V</div>
<div style="left:988px;top:732px;width:13px;height:13px;background:#5d6268;box-shadow:inset 2px 2px 0 #16191c, inset -1px -1px 0 #b9bec2"></div>
<svg style="left:988px;top:732px" width="13" height="13"><polyline points="3.3,6 5.8,9 10,3.3" fill="none" stroke="#ffffff" stroke-width="2"/></svg>
<div class="t" style="left:1008.3px;top:731.91px;font-size:14.4px;line-height:14.4px;color:#f2f2f2;">Update inputs automatically</div>
<div style="left:975px;top:777px;width:444px;height:52px;box-sizing:border-box;border:1px solid;border-color:#4a4f54 #aeb3b8 #aeb3b8 #4a4f54;box-shadow:inset 1px 1px 0 #aeb3b8, inset -1px -1px 0 #4a4f54"></div>
<div class="t" style="left:980px;top:770.56px;font-size:14.4px;line-height:14.4px;color:#f2f2f2;background:#72797f;padding:0 1px 0 2px">LEDs</div>
<div class="t" style="left:1004.5px;top:799.31px;font-size:14.4px;line-height:14.4px;color:#f2f2f2;">Dark Mode</div>
<div style="left:1088px;top:792px;width:44px;height:27px;background:#025a7e;box-shadow:inset 1px 1px 0 #7db8d0, inset -1px -1px 0 #08202c, inset -2px -2px 0 #043d55"></div>
<div class="t" style="left:810.0px;width:600px;text-align:center;top:799.26px;font-size:14.4px;line-height:14.4px;color:#f2f2f2;">on</div>
<div style="left:1142px;top:792px;width:44px;height:27px;background:#025a7e;box-shadow:inset 1px 1px 0 #7db8d0, inset -1px -1px 0 #08202c, inset -2px -2px 0 #043d55"></div>
<div class="t" style="left:864.0px;width:600px;text-align:center;top:799.26px;font-size:14.4px;line-height:14.4px;color:#f2f2f2;">off</div>
<div class="t" style="left:1228.3px;top:800.66px;font-size:12.8px;line-height:12.8px;color:#f2f2f2;">User LED</div>
<div style="left:1296px;top:792px;width:44px;height:27px;background:#025a7e;box-shadow:inset 1px 1px 0 #7db8d0, inset -1px -1px 0 #08202c, inset -2px -2px 0 #043d55"></div>
<div class="t" style="left:1018.0px;width:600px;text-align:center;top:799.26px;font-size:14.4px;line-height:14.4px;color:#f2f2f2;">on</div>
<div style="left:1350px;top:792px;width:44px;height:27px;background:#025a7e;box-shadow:inset 1px 1px 0 #7db8d0, inset -1px -1px 0 #08202c, inset -2px -2px 0 #043d55"></div>
<div class="t" style="left:1072.0px;width:600px;text-align:center;top:799.26px;font-size:14.4px;line-height:14.4px;color:#f2f2f2;">off</div>
<div class="t" style="left:977px;top:839.63px;font-size:10px;line-height:10px;color:#e4e4e4;-webkit-text-stroke:0.3px #e4e4e4">© 2025 | FEMTO Messtechnik GmbH</div>
</body></html>
